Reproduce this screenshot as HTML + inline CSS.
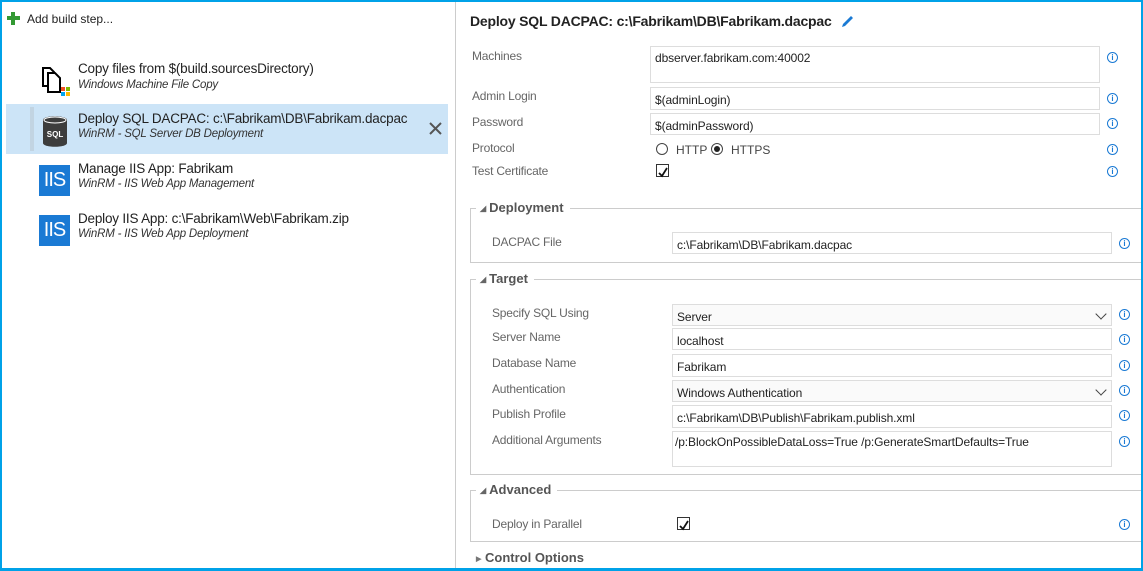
<!DOCTYPE html>
<html><head><meta charset="utf-8"><style>
*{box-sizing:border-box;margin:0;padding:0}
body{width:1143px;height:571px;overflow:hidden;background:#fff;font-family:"Liberation Sans",sans-serif;position:relative}
.frame{position:absolute;inset:0;border:2px solid #00a2e8;border-bottom-width:3px;pointer-events:none;z-index:10}
.a{position:absolute;white-space:nowrap}
.t{font-size:13.5px;color:#222;letter-spacing:-0.2px}
.s{font-size:11.5px;color:#333;font-style:italic;letter-spacing:-0.2px}
.lbl{position:absolute;font-size:12px;color:#666;letter-spacing:-0.2px}
.in{position:absolute;border:1px solid #ddd;background:#fff;font-size:12px;color:#222;padding:5px 4px 0;letter-spacing:-0.1px;white-space:nowrap}
.info{position:absolute;width:11px;height:11px;border:1.3px solid #1a7ad4;border-radius:50%;color:#1a7ad4;font-size:8px;font-weight:bold;line-height:9px;text-align:center}
.grp{position:absolute;left:470px;right:0;border:1px solid #ccc;border-right:none}
.gh{position:absolute;font-size:13px;font-weight:bold;color:#555;background:#fff;padding:0 6px 0 4px}
.gh i{font-style:normal;font-size:8px;color:#666;margin-right:3px;vertical-align:1px}
.chev{position:absolute;right:6px;top:5px;width:8px;height:8px;border-right:1.3px solid #444;border-bottom:1.3px solid #444;transform:rotate(45deg)}
.cb{position:absolute;width:13px;height:13px;border:1px solid #333;background:#fff}
.iis{position:absolute;width:31px;height:31px;background:#1a7ad4;color:#fff;font-size:20px;line-height:31px;text-align:center;letter-spacing:-1px}
</style></head><body>
<div class="frame"></div>
<!-- left -->
<div class="a" style="left:7px;top:16px;width:13px;height:4px;background:#339933"></div>
<div class="a" style="left:11px;top:12px;width:4px;height:13px;background:#339933"></div>
<div class="a" style="left:27px;top:12px;font-size:12px;color:#222">Add build step...</div>

<svg class="a" style="left:42px;top:67px" width="28" height="30" viewBox="0 0 28 30"><path d="M1 1h7l4 4v14H1z" fill="#fff" stroke="#000" stroke-width="2"/><path d="M6 6h7l5 5v14H6z" fill="#fff" stroke="#000" stroke-width="2"/><rect x="19" y="20" width="4" height="4" fill="#f25022"/><rect x="24" y="20" width="4" height="4" fill="#7fba00"/><rect x="19" y="25" width="4" height="4" fill="#00a4ef"/><rect x="24" y="25" width="4" height="4" fill="#ffb900"/></svg>
<div class="a t" style="left:78px;top:61px">Copy files from $(build.sourcesDirectory)</div>
<div class="a s" style="left:78px;top:79px">Windows Machine File Copy</div>

<div class="a" style="left:6px;top:104px;width:442px;height:50px;background:#cce4f7"></div>
<div class="a" style="left:30px;top:107px;width:4px;height:44px;background-image:radial-gradient(#aaa 0.6px,transparent 0.8px);background-size:2px 2px"></div>
<svg class="a" style="left:42px;top:115px" width="26" height="33" viewBox="0 0 26 33"><path d="M1 5C1 0 25 0 25 5V28C25 33 1 33 1 28Z" fill="#3d3d3d"/><ellipse cx="13" cy="5" rx="11" ry="3" fill="none" stroke="#fff" stroke-width="1"/><text x="13" y="22" font-family="Liberation Sans" font-size="8" font-weight="bold" fill="#fff" text-anchor="middle">SQL</text></svg>
<div class="a t" style="left:78px;top:111px">Deploy SQL DACPAC: c:\Fabrikam\DB\Fabrikam.dacpac</div>
<div class="a s" style="left:78px;top:128px">WinRM - SQL Server DB Deployment</div>
<svg class="a" style="left:429px;top:122px" width="13" height="13"><path d="M1 1L12 12M12 1L1 12" stroke="#555" stroke-width="2"/></svg>

<div class="iis" style="left:39px;top:165px">IIS</div>
<div class="a t" style="left:78px;top:161px">Manage IIS App: Fabrikam</div>
<div class="a s" style="left:78px;top:178px">WinRM - IIS Web App Management</div>
<div class="iis" style="left:39px;top:215px">IIS</div>
<div class="a t" style="left:78px;top:211px">Deploy IIS App: c:\Fabrikam\Web\Fabrikam.zip</div>
<div class="a s" style="left:78px;top:228px">WinRM - IIS Web App Deployment</div>

<div class="a" style="left:455px;top:0;width:1px;height:571px;background:#ccc"></div>

<!-- right -->
<div class="a" style="left:470px;top:13px;font-size:14px;font-weight:bold;color:#222;letter-spacing:-0.2px">Deploy SQL DACPAC: c:\Fabrikam\DB\Fabrikam.dacpac</div>
<svg class="a" style="left:841px;top:14px" width="14" height="14" viewBox="0 0 14 14"><path d="M2 10L10 2L12 4L4 12L1 13Z" fill="#1a7ad4"/></svg>

<div class="lbl" style="left:472px;top:49px">Machines</div>
<div class="in" style="left:650px;top:46px;width:450px;height:37px;padding-top:4px">dbserver.fabrikam.com:40002</div>
<div class="info" style="left:1107px;top:52px">i</div>
<div class="lbl" style="left:472px;top:89px">Admin Login</div>
<div class="in" style="left:650px;top:87px;width:450px;height:23px">$(adminLogin)</div>
<div class="info" style="left:1107px;top:93px">i</div>
<div class="lbl" style="left:472px;top:115px">Password</div>
<div class="in" style="left:650px;top:113px;width:450px;height:22px">$(adminPassword)</div>
<div class="info" style="left:1107px;top:118px">i</div>
<div class="lbl" style="left:472px;top:141px">Protocol</div>
<div class="a" style="left:656px;top:143px;width:12px;height:12px;border:1px solid #444;border-radius:50%"></div>
<div class="a" style="left:676px;top:143px;font-size:12px;color:#444">HTTP</div>
<div class="a" style="left:711px;top:143px;width:12px;height:12px;border:1px solid #444;border-radius:50%"><div style="margin:2px;width:6px;height:6px;border-radius:50%;background:#222"></div></div>
<div class="a" style="left:731px;top:143px;font-size:12px;color:#444">HTTPS</div>
<div class="info" style="left:1107px;top:144px">i</div>
<div class="lbl" style="left:472px;top:164px">Test Certificate</div>
<div class="cb" style="left:656px;top:164px"><svg width="11" height="11"><path d="M2 6L5 9L10 1" stroke="#111" stroke-width="1.8" fill="none"/></svg></div>
<div class="info" style="left:1107px;top:166px">i</div>

<div class="grp" style="top:208px;height:55px"></div>
<div class="gh" style="left:476px;top:200px"><i>◢</i>Deployment</div>
<div class="lbl" style="left:492px;top:235px">DACPAC File</div>
<div class="in" style="left:672px;top:232px;width:440px;height:22px">c:\Fabrikam\DB\Fabrikam.dacpac</div>
<div class="info" style="left:1119px;top:238px">i</div>

<div class="grp" style="top:279px;height:196px"></div>
<div class="gh" style="left:476px;top:271px"><i>◢</i>Target</div>
<div class="lbl" style="left:492px;top:306px">Specify SQL Using</div>
<div class="in" style="left:672px;top:304px;width:440px;height:22px;background:#fafafa">Server<div class="chev"></div></div>
<div class="info" style="left:1119px;top:309px">i</div>
<div class="lbl" style="left:492px;top:330px">Server Name</div>
<div class="in" style="left:672px;top:328px;width:440px;height:22px">localhost</div>
<div class="info" style="left:1119px;top:334px">i</div>
<div class="lbl" style="left:492px;top:356px">Database Name</div>
<div class="in" style="left:672px;top:354px;width:440px;height:23px">Fabrikam</div>
<div class="info" style="left:1119px;top:360px">i</div>
<div class="lbl" style="left:492px;top:382px">Authentication</div>
<div class="in" style="left:672px;top:380px;width:440px;height:22px;background:#fafafa">Windows Authentication<div class="chev"></div></div>
<div class="info" style="left:1119px;top:385px">i</div>
<div class="lbl" style="left:492px;top:407px">Publish Profile</div>
<div class="in" style="left:672px;top:405px;width:440px;height:23px">c:\Fabrikam\DB\Publish\Fabrikam.publish.xml</div>
<div class="info" style="left:1119px;top:410px">i</div>
<div class="lbl" style="left:492px;top:433px">Additional Arguments</div>
<div class="in" style="left:672px;top:431px;width:440px;height:36px;padding:3px 2px 0">/p:BlockOnPossibleDataLoss=True /p:GenerateSmartDefaults=True</div>
<div class="info" style="left:1119px;top:436px">i</div>

<div class="grp" style="top:490px;height:52px"></div>
<div class="gh" style="left:476px;top:482px"><i>◢</i>Advanced</div>
<div class="lbl" style="left:492px;top:517px">Deploy in Parallel</div>
<div class="cb" style="left:677px;top:517px"><svg width="11" height="11"><path d="M2 6L5 9L10 1" stroke="#111" stroke-width="1.8" fill="none"/></svg></div>
<div class="info" style="left:1119px;top:519px">i</div>

<div class="gh" style="left:472px;top:550px;font-size:13px"><span style="font-size:7px;color:#777;vertical-align:1px">▶</span> Control Options</div>
</body></html>
